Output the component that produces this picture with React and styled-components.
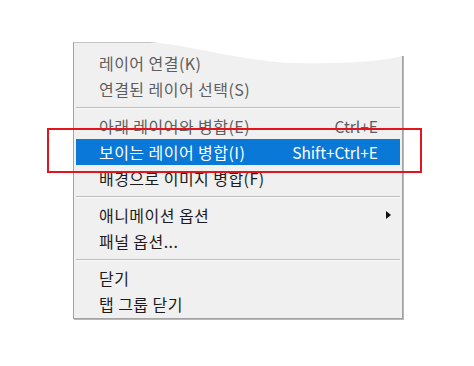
import React from "react";
import styled, { createGlobalStyle } from "styled-components";

const Global = createGlobalStyle`
  html, body { margin: 0; padding: 0; background: #ffffff; }
  body { font-family: "Noto Sans CJK KR", "Noto Sans", sans-serif; }
`;

const Page = styled.div`
  position: relative;
  width: 474px;
  height: 366px;
  box-sizing: border-box;
  padding: 42px 0 0 73px;
  overflow: hidden;
  background: #ffffff;
`;

const Menu = styled.div`
  width: 324px;
  box-sizing: content-box;
  background: #f0f0f0;
  border: 1px solid #a3a3a3;
  border-top-color: #c4c4c4;
  box-shadow: 1px 1px 0 #b8b8b8;
  padding: 7px 2px 1px 2px;
  display: flex;
  flex-direction: column;
`;

const Item = styled.div`
  display: flex;
  align-items: center;
  justify-content: space-between;
  height: 26px;
  padding: 0 22px 0 23px;
  font-size: 16px;
  line-height: 26px;
  white-space: nowrap;
  color: ${(p) => (p.$active ? "#ffffff" : p.$dim ? "#5e5e5e" : "#1c1c1c")};
  background: ${(p) => (p.$active ? "#0a78d6" : "transparent")};
`;

const Label = styled.span`
  display: block;
  letter-spacing: 0.45px;
`;

const Shortcut = styled.span`
  display: block;
  font-size: 15.5px;
`;

const Arrow = styled.span`
  display: block;
  width: 0;
  height: 0;
  margin-right: -13px;
  border-top: 4.5px solid transparent;
  border-bottom: 4.5px solid transparent;
  border-left: 5px solid #111111;
`;

const Separator = styled.div`
  height: 11px;
  display: flex;
  align-items: center;
  &::after {
    content: "";
    display: block;
    width: 100%;
    height: 1px;
    background: #bdbdbd;
    box-shadow: 0 1px 0 #fafafa;
  }
`;

const Tear = styled.svg`
  position: absolute;
  left: 0;
  top: 0;
  width: 474px;
  height: 80px;
  pointer-events: none;
`;

const Callout = styled.div`
  position: absolute;
  left: 47px;
  top: 128px;
  width: 375px;
  height: 45px;
  box-sizing: border-box;
  border: 2px solid #e2141c;
  pointer-events: none;
`;

const groups = [
  [
    { label: "레이어 연결(K)", dim: true },
    { label: "연결된 레이어 선택(S)", dim: true },
  ],
  [
    { label: "아래 레이어와 병합(E)", shortcut: "Ctrl+E", dim: true },
    { label: "보이는 레이어 병합(I)", shortcut: "Shift+Ctrl+E", active: true },
    { label: "배경으로 이미지 병합(F)" },
  ],
  [
    { label: "애니메이션 옵션", submenu: true },
    { label: "패널 옵션..." },
  ],
  [{ label: "닫기" }, { label: "탭 그룹 닫기" }],
];

export default function App() {
  return (
    <>
      <Global />
      <Page>
        <Menu>
          {groups.map((g, gi) => (
            <React.Fragment key={gi}>
              {gi > 0 && <Separator />}
              {g.map((it) => (
                <Item key={it.label} $active={it.active} $dim={it.dim}>
                  <Label>{it.label}</Label>
                  {it.shortcut && <Shortcut>{it.shortcut}</Shortcut>}
                  {it.submenu && <Arrow />}
                </Item>
              ))}
            </React.Fragment>
          ))}
        </Menu>
        <Tear viewBox="0 0 474 80">
          <path
            d="M0 0 H474 V56 H402 C385 61 345 64 295 63 C245 62 195 46 150 42 H0 Z"
            fill="#ffffff"
          />
        </Tear>
        <Callout />
      </Page>
    </>
  );
}
